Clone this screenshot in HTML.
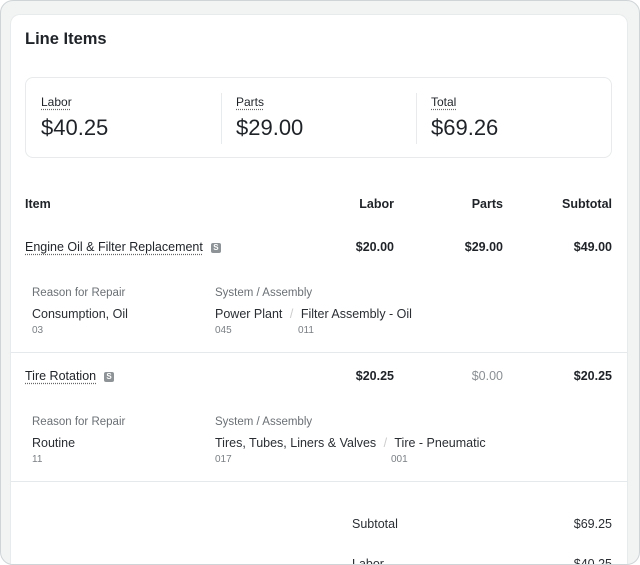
<!DOCTYPE html>
<html><head><style>
*{box-sizing:border-box;margin:0;padding:0}
body{width:640px;height:565px;background:#fff;font-family:"Liberation Sans",sans-serif;color:#1f2328;overflow:hidden;position:relative}
.outer{position:absolute;left:0;top:0;width:640px;height:565px;border:1px solid #cfd4d6;border-radius:13px;background:#f2f4f4;overflow:hidden}
.card{position:absolute;left:10px;top:14px;width:616px;height:550px;background:#fff;border-radius:9px 9px 0 0;box-shadow:0 0 0 1px #e8ebec;overflow:hidden}
.a{position:absolute;white-space:nowrap}
.dot{text-decoration:underline dotted #666;text-underline-offset:3px}
.sum{position:absolute;left:14px;top:62px;width:587px;height:81px;border:1px solid #e8eaeb;border-radius:8px}
.vl{position:absolute;top:15px;width:1px;height:51px;background:#e8eaeb}
.hl{position:absolute;left:0;width:616px;height:1px;background:#e6e9eb}
.s{display:inline-block;width:10px;height:10px;background:#8d9396;border-radius:2px;color:#fff;font-size:8px;font-weight:bold;text-align:center;line-height:10px;vertical-align:1px;margin-left:8px}
.g{color:#6b7075;font-size:11.5px}
.m{font-size:12.5px;color:#2a2e33}
.c{color:#7a7f84;font-size:10px}
.b{font-weight:bold;font-size:12.5px}
</style></head><body>
<div class="outer"><div class="card">
<div class="a" style="left:14px;top:15px;font-size:16.5px;font-weight:bold">Line Items</div>
<div class="sum">
<div class="a dot" style="left:15px;top:17px;font-size:12px">Labor</div>
<div class="a" style="left:15px;top:37px;font-size:22px">$40.25</div>
<div class="vl" style="left:195px"></div>
<div class="a dot" style="left:210px;top:17px;font-size:12px">Parts</div>
<div class="a" style="left:210px;top:37px;font-size:22px">$29.00</div>
<div class="vl" style="left:390px"></div>
<div class="a dot" style="left:405px;top:17px;font-size:12px">Total</div>
<div class="a" style="left:405px;top:37px;font-size:22px">$69.26</div>
</div>
<div class="a b" style="left:14px;top:182px">Item</div>
<div class="a b" style="right:233px;top:182px">Labor</div>
<div class="a b" style="right:124px;top:182px">Parts</div>
<div class="a b" style="right:15px;top:182px">Subtotal</div>

<div class="a" style="left:14px;top:225px;font-size:12.5px"><span class="dot">Engine Oil &amp; Filter Replacement</span><span class="s">S</span></div>
<div class="a b" style="right:233px;top:225px">$20.00</div>
<div class="a b" style="right:124px;top:225px">$29.00</div>
<div class="a b" style="right:15px;top:225px">$49.00</div>
<div class="a g" style="left:21px;top:272px">Reason for Repair</div>
<div class="a m" style="left:21px;top:292px">Consumption, Oil</div>
<div class="a c" style="left:21px;top:310px">03</div>
<div class="a g" style="left:204px;top:272px">System / Assembly</div>
<div class="a m" style="left:204px;top:292px">Power Plant <span style="color:#ccc;margin:0 4px">/</span> Filter Assembly - Oil</div>
<div class="a c" style="left:204px;top:310px">045</div>
<div class="a c" style="left:287px;top:310px">011</div>
<div class="hl" style="top:337px"></div>

<div class="a" style="left:14px;top:354px;font-size:12.5px"><span class="dot">Tire Rotation</span><span class="s">S</span></div>
<div class="a b" style="right:233px;top:354px">$20.25</div>
<div class="a" style="right:124px;top:354px;font-size:12.5px;color:#8a8f93">$0.00</div>
<div class="a b" style="right:15px;top:354px">$20.25</div>
<div class="a g" style="left:21px;top:401px">Reason for Repair</div>
<div class="a m" style="left:21px;top:421px">Routine</div>
<div class="a c" style="left:21px;top:439px">11</div>
<div class="a g" style="left:204px;top:401px">System / Assembly</div>
<div class="a m" style="left:204px;top:421px">Tires, Tubes, Liners &amp; Valves <span style="color:#ccc;margin:0 4px">/</span> Tire - Pneumatic</div>
<div class="a c" style="left:204px;top:439px">017</div>
<div class="a c" style="left:380px;top:439px">001</div>
<div class="hl" style="top:466px"></div>

<div class="a m" style="left:341px;top:502px">Subtotal</div>
<div class="a m" style="right:15px;top:502px">$69.25</div>
<div class="a m" style="left:341px;top:542px">Labor</div>
<div class="a m" style="right:15px;top:542px">$40.25</div>
</div></div>
</body></html>
